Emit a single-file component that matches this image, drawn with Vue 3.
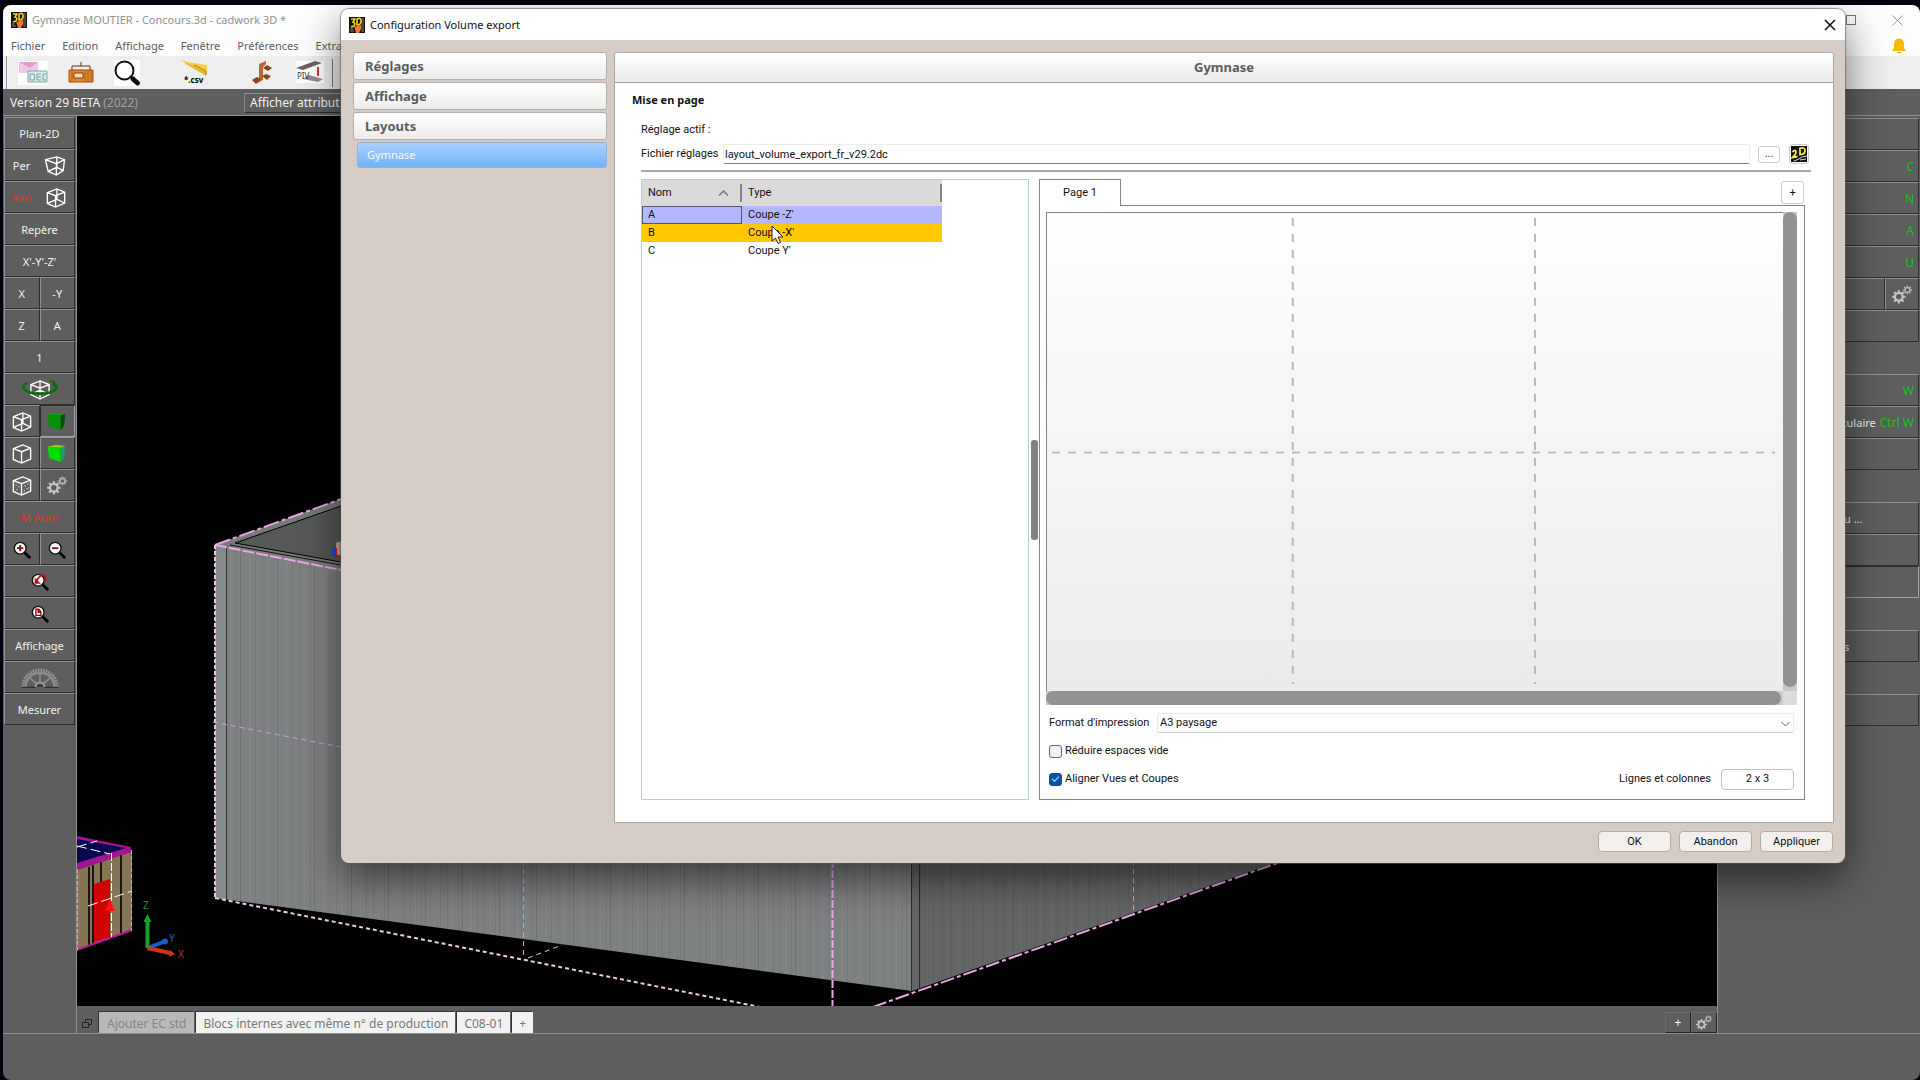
<script setup>
import { ref } from 'vue'

const menus = ['Fichier', 'Edition', 'Affichage', 'Fenêtre', 'Préférences', 'Extra']

const leftRows = [
  [{ text: 'Plan-2D' }],
  [{ text: 'Per', icon: 'cube-persp' }],
  [{ text: 'Axo', icon: 'cube-wire', red: true }],
  [{ text: 'Repère' }],
  [{ text: "X'-Y'-Z'" }],
  [{ text: 'X' }, { text: '-Y' }],
  [{ text: 'Z' }, { text: 'A' }],
  [{ text: '1' }],
  [{ icon: 'cube-orbit', label: 'Rotation', wide: true }],
  [{ icon: 'cube-wire', label: 'Filaire' }, { icon: 'cube-green', label: 'Ombrage', pressed: true }],
  [{ icon: 'cube-hidden', label: 'Lignes cachées' }, { icon: 'cube-lime', label: 'Rendu' }],
  [{ icon: 'cube-dots', label: 'Arêtes' }, { icon: 'gears', label: 'Options' }],
  [{ text: 'M Auto', red: true }],
  [{ icon: 'zoom-in', label: 'Zoom avant' }, { icon: 'zoom-out', label: 'Zoom arrière' }],
  [{ icon: 'zoom-back', label: 'Zoom précédent' }],
  [{ icon: 'zoom-page', label: 'Zoom page' }],
  [{ text: 'Affichage' }],
  [{ icon: 'gauge', label: 'Unités', wide: true }],
  [{ text: 'Mesurer' }],
]

const rightRows = [
  { }, { key: 'C' }, { key: 'N' }, { key: 'A' }, { key: 'U' }, { gears: true }, { },
  { gap: true },
  { key: 'W' }, { text: 'culaire', key: 'Ctrl W' }, { },
  { gap: true },
  { text: 'u ...', start: true }, { }, { pressed: true },
  { gap: true },
  { text: 's', start: true },
  { gap: true },
  { },
]

const navItems = ['Réglages', 'Affichage', 'Layouts']
const views = [
  { name: 'A', type: "Coupe -Z'", state: 'selected' },
  { name: 'B', type: "Coupe -X'", state: 'hover' },
  { name: 'C', type: "Coupe Y'", state: '' },
]

const file = ref('layout_volume_export_fr_v29.2dc')
const format = ref('A3 paysage')
const reduce = ref(false)
const align = ref(true)

function gear(cx, cy, r, teeth) {
  const pts = []
  const step = (Math.PI * 2) / teeth
  for (let i = 0; i < teeth; i++) {
    const a = i * step
    for (const [o, k] of [[-0.26, 0.74], [-0.18, 1], [0.18, 1], [0.26, 0.74]]) {
      pts.push(`${(cx + Math.cos(a + o * step) * r * k).toFixed(2)} ${(cy + Math.sin(a + o * step) * r * k).toFixed(2)}`)
    }
  }
  const h = r * 0.4
  return `M${pts.join('L')}ZM${cx - h} ${cy}a${h} ${h} 0 1 0 ${h * 2} 0a${h} ${h} 0 1 0 ${-h * 2} 0Z`
}

const bigGear = gear(7.5, 13, 7.5, 8)
const smallGear = gear(17, 5.5, 5, 8)
</script>

<template>
  <div class="screen">
    <svg class="defs" aria-hidden="true">
      <symbol id="logo" viewBox="0 0 16 16">
        <rect width="16" height="16" fill="#14110d" />
        <rect x="12" y="1" width="3" height="14" fill="#4a463c" />
        <path d="M2 2h4l-2 3q3 1 1 4l-3 1" fill="none" stroke="#f4d21f" stroke-width="1.6" />
        <path d="M8 2v6q4 0 4-4t-4-2" fill="none" stroke="#f4d21f" stroke-width="1.6" />
        <path d="M5 9l2 1 1-2 1 1 3-1v4l-2 4H7z" fill="#f07830" />
        <path d="M1 12h3M1 14h4" stroke="#8a8470" />
      </symbol>
      <symbol id="cube-wire" viewBox="0 0 22 22">
        <path d="M1.500 5L12 1l8.500 3.500v12L10.500 21l-9-4zM1.500 5l9 3.500 10-4M10.500 8.500V21M12 1v11.500M1.500 17L12 12.500l8.500 4" />
      </symbol>
      <symbol id="cube-persp" viewBox="0 0 22 22">
        <path d="M.500 4L13 1l8.500 3-1.500 12-7.500 5L3.500 17zM.500 4l12 4.500 9-4.500M12.500 8.500V21M13 1v11.500M3.500 17l9.500-4.500 7 3.500" />
      </symbol>
      <symbol id="cube-hidden" viewBox="0 0 22 22">
        <path d="M1.500 5L12 1l8.500 3.500v12L10.500 21l-9-4zM1.500 5l9 3.500 10-4M10.500 8.500V21" />
      </symbol>
      <symbol id="cube-dots" viewBox="0 0 22 22">
        <path d="M1.500 5L12 1l8.500 3.500v12L10.500 21l-9-4zM1.500 5l9 3.500 10-4M10.500 8.500V21" />
        <path d="M4 10h1M7 12h1M5 15h1M14 11h1M17 9h1M16 14h1M13 16h1M18 13h1" />
      </symbol>
      <symbol id="cube-green" viewBox="0 0 22 22">
        <path d="M1 3l8-2 11 1-5 2z" fill="#0aa00a" stroke="none" />
        <path d="M1 3l14 1v16L2 15z" fill="#009300" stroke="none" />
        <path d="M15 4l5-2-1 13-4 5z" fill="#004f00" stroke="none" />
      </symbol>
      <symbol id="cube-lime" viewBox="0 0 22 22">
        <path d="M1 3l8-2 11 1-5 2z" fill="#9bd010" stroke="none" />
        <path d="M1 3l14 1v16L2 15z" fill="#00dc00" stroke="none" />
        <path d="M15 4l5-2-1 13-4 5z" fill="#17a45c" stroke="none" />
      </symbol>
      <symbol id="cube-orbit" viewBox="0 0 40 22">
        <path d="M10 5l10-4 10 4v11l-10 5-10-5zM10 5l10 4 10-4M20 9v12M20 1v10M10 16l10-5 10 5" />
        <path d="M6 3C-3 8 4 15 20 15S43 8 34 3" stroke="#087008" stroke-width="3" />
        <path d="M31 1l5 1-1 5" stroke="#087008" stroke-width="2" />
      </symbol>
      <symbol id="gears" viewBox="0 0 22 22">
        <path :d="bigGear" fill="#c4c4c4" fill-rule="evenodd" stroke="none" />
        <path :d="smallGear" fill="#b4b4b4" fill-rule="evenodd" stroke="none" />
      </symbol>
      <symbol id="zoom-in" viewBox="0 0 20 20">
        <path d="M13 13l6 6" stroke="#000" stroke-width="3" />
        <circle cx="8" cy="8" r="6.500" fill="#fff" stroke="#111" />
        <path d="M8 4.500v7M4.500 8h7" stroke="#8d0808" stroke-width="2" />
      </symbol>
      <symbol id="zoom-out" viewBox="0 0 20 20">
        <path d="M13 13l6 6" stroke="#000" stroke-width="3" />
        <circle cx="8" cy="8" r="6.500" fill="#fff" stroke="#111" />
        <path d="M4.500 8h7" stroke="#8d0808" stroke-width="2" />
      </symbol>
      <symbol id="zoom-back" viewBox="0 0 20 20">
        <path d="M13 13l6 6" stroke="#000" stroke-width="3" />
        <circle cx="8" cy="8" r="6.500" fill="#fff" stroke="#111" />
        <path d="M6 10Q8 3 14 2q4 2 1 8" fill="none" stroke="#c01010" stroke-width="2" />
        <path d="M4 5v7h7z" fill="#c01010" stroke="none" />
      </symbol>
      <symbol id="zoom-page" viewBox="0 0 20 20">
        <path d="M13 13l6 6" stroke="#000" stroke-width="3" />
        <circle cx="8" cy="8" r="6.500" fill="#fff" stroke="#111" />
        <path d="M5.500 4.500h3l2.500 3v4H5.500zM8 4.500V8h3" stroke="#8d0808" stroke-width="1.500" />
      </symbol>
      <symbol id="gauge" viewBox="0 0 42 22">
        <path d="M2 21a19 19 0 0 1 38 0" stroke="#949494" stroke-width="3" stroke-dasharray="2 1" />
        <path d="M5 21a16 16 0 0 1 32 0" stroke="#8a8a8a" stroke-width="3" />
        <path d="M16 21a5 5 0 0 1 10 0" stroke="#949494" stroke-width="3" />
        <path d="M21 15V5M17 17L9 10M25 17l8-7" stroke="#8a8a8a" stroke-width="2" />
        <path d="M1 21.500h15M26 21.500h15M19 21v-2h4v2" stroke="#2c2c2c" />
      </symbol>
    </svg>

    <div class="window">
      <header class="titlebar">
        <svg class="logo"><use href="#logo" /></svg>
        <h1>Gymnase MOUTIER - Concours.3d - cadwork 3D *</h1>
        <div class="win-buttons">
          <button type="button" aria-label="Agrandir"><svg width="10" height="10"><rect x="0.5" y="0.5" width="9" height="9" fill="none" stroke="#777" /></svg></button>
          <button type="button" aria-label="Fermer"><svg width="11" height="11"><path d="M0.5 0.5l10 10m0-10l-10 10" stroke="#999" /></svg></button>
        </div>
      </header>
      <nav class="menubar">
        <a v-for="m in menus" :key="m" href="#">{{ m }}</a>
        <svg class="bell" width="16" height="16" viewBox="0 0 16 16"><path d="M1 13l2-3V6q0-5 5-5.500Q13 1 13 6v4l2 3z" fill="#fbb800" /><path d="M6 14h4v1H6z" fill="#e09c00" /></svg>
      </nav>
      <div class="toolbar">
        <svg width="30" height="24" viewBox="0 0 30 24">
          <rect width="30" height="24" fill="#fff" />
          <path d="M1 1h19v11H1z" fill="#f2c8e6" /><path d="M1 1h19l-8 6z" fill="#dd9fce" />
          <path d="M10 10h19v11H10z" fill="#d9f1ee" stroke="#7fa5a2" />
          <path d="M12 13h4q2 3 0 6h-4zM23 13h-4v6h4M19 16h4M28 13h-3v6h3" fill="none" stroke="#7b9cb0" />
        </svg>
        <svg width="26" height="22" viewBox="0 0 26 22">
          <path d="M13 0v4M4 8V4h18v4" fill="none" stroke="#6c2c10" />
          <path d="M1 8h24v12H1z" fill="#e48a2a" stroke="#a24a12" />
          <path d="M4 8v12M17 8v12M20 8v12M23 8v12" stroke="#a85a1a" />
          <path d="M6 11h9v5H6z" fill="#f8e0c4" stroke="#8c3c10" />
        </svg>
        <svg width="26" height="26" viewBox="0 0 26 26">
          <rect width="26" height="26" fill="#fff" />
          <circle cx="10.500" cy="10.500" r="9" fill="#fff" stroke="#111" stroke-width="2" />
          <path d="M19 19l4.500 4" stroke="#111" stroke-width="5" stroke-linecap="round" />
          <path d="M16 16l4 4" stroke="#111" stroke-width="2" />
        </svg>
        <svg class="wide" width="27" height="28" viewBox="0 0 27 28">
          <path d="M0 1l24 11v5L4 5z" fill="#ecb826" /><path d="M0 2l25 4v6L10 6z" fill="#f6d04c" /><path d="M12 6l12 6v4" fill="none" stroke="#b07f10" />
          <text x="2" y="24" font-family="Noto Sans" font-size="8" font-weight="700">*.csv</text>
        </svg>
        <svg class="wide" width="22" height="24" viewBox="0 0 22 24">
          <path d="M8 3l7-3v3l-3 3v13l-5 3-3-2 4-3z" fill="#b5693a" />
          <path d="M12 7l4-3 5 3-4 3zM11 15l4-2 5 2-4 4zM1 19l5-3 4 2-5 5z" fill="#8f4518" />
        </svg>
        <svg class="plate" width="28" height="24" viewBox="0 0 28 24">
          <rect width="28" height="22" fill="#fff" />
          <path d="M0 7l19-7 7 2L7 9z" fill="#6d6261" /><path d="M7 18l6-4 14 4-5 3z" fill="#8f8f8f" />
          <path d="M22 6v9" stroke="#e03030" stroke-width="2" />
          <text x="1" y="18" font-family="Noto Sans" font-size="8" fill="#333">PIV</text>
        </svg>
        <i class="sep"></i>
      </div>
      <div class="version">
        <span>Version 29 BETA <i>(2022)</i></span>
        <button type="button">Afficher attribut</button>
      </div>

      <div class="workspace">
        <aside class="left">
          <div v-for="(row, i) in leftRows" :key="i" class="row">
            <button v-for="(c, j) in row" :key="j" type="button" :aria-label="c.label" :class="{ red: c.red, pressed: c.pressed }">
              <span v-if="c.text">{{ c.text }}</span>
              <svg v-if="c.icon" class="ico" :class="{ big: c.wide, lens: c.icon.startsWith('zoom') }"><use :href="'#' + c.icon" /></svg>
            </button>
          </div>
        </aside>

        <div class="center">
          <svg class="scene" role="img" aria-label="Vue 3D">
            <defs>
              <pattern id="steel" width="37" height="60" patternUnits="userSpaceOnUse">
                <rect width="37" height="60" fill="#7e8181" />
                <path d="M3.500 0v60M14.500 0v60M33.500 0v60" stroke="#767979" />
                <path d="M8.500 0v60M27.500 0v60" stroke="#848787" />
                <path d="M18.500 0v60" stroke="#6f7272" />
              </pattern>
              <pattern id="steel-dark" width="31" height="60" patternUnits="userSpaceOnUse">
                <rect width="31" height="60" fill="#646666" />
                <path d="M3.500 0v60M12.500 0v60M21.500 0v60" stroke="#5d5f5f" />
                <path d="M17.500 0v60M28.500 0v60" stroke="#696b6b" />
              </pattern>
            </defs>
            <g transform="translate(-77 -116)">
              <path d="M215 545L341 499V572z" fill="#777a7a" />
              <path d="M235 543L341 506V562z" fill="#565858" stroke="#000" />
              <path d="M230 545l111 20" stroke="#111" fill="none" />
              <path d="M336 543l5-2v14h-5z" fill="#c8a890" /><path d="M332 548h3v8h-3z" fill="#2348c8" /><path d="M335 548h2v9h-2z" fill="#d01818" />
              <path d="M215 545L912 672V991L215 898z" fill="url(#steel)" />
              <path d="M215 545L227 547V900L215 898z" fill="#868989" />
              <path d="M226.500 547V900" stroke="#333" />
              <path d="M912 672L1560 640V762L912 991z" fill="url(#steel-dark)" />
              <path d="M911.500 672V991M919.500 672V988" stroke="#2b2d2d" />
              <g fill="none" stroke="#eba6e6" stroke-width="2">
                <path d="M215 545L341 499" stroke-dasharray="16 3 4 3" />
                <path d="M215 545L341 570" stroke-dasharray="12 2" />
                <path d="M215 545V898" stroke="#f0bcec" stroke-dasharray="4 2" />
                <path d="M215 898L770 1009" stroke="#eccbe9" stroke-dasharray="4 3" />
                <path d="M832.500 840V1006" stroke-dasharray="8 2" />
                <path d="M873 1007L1300 855" stroke-dasharray="14 3 4 3" />
              </g>
              <g fill="none" stroke="#d3a0cf" stroke-dasharray="5 4">
                <path d="M213 722L341 747" /><path d="M523.500 860V957" /><path d="M528 958L562 945" stroke="#ccc" /><path d="M1133.500 860V912" />
              </g>
              <g>
                <path d="M77 836L131 847V853L77 870z" fill="#a3158f" />
                <path d="M77 839L126 848L77 863z" fill="#080850" />
                <path d="M77 847L97 841M77 846L110 854" stroke="#fff" stroke-dasharray="10 4" />
                <path d="M77 870L132 852V930L77 950z" fill="#857555" />
                <path d="M89 867V945M93 865V944M101 862V884M121 855V933" stroke="#1c1510" stroke-width="2" />
                <path d="M94 884L110 879V937L94 942z" fill="#d00404" />
                <path d="M77 950L132 930" stroke="#b01a9a" stroke-width="2" />
                <path d="M111.500 853V937" stroke="#fff" stroke-dasharray="8 2" />
                <path d="M88 906L132 891" stroke="#fff" stroke-dasharray="10 4" />
                <path d="M110 899L115 911H105z" fill="#f11" />
                <path d="M131.500 850V931M77.500 869V950" stroke="#d8a8a8" stroke-dasharray="4 2" />
              </g>
              <g fill="none" stroke-width="4">
                <path d="M147.500 948L166 941" stroke="#1560c8" /><circle cx="165" cy="941.500" r="3" fill="#1560c8" stroke="none" />
                <path d="M147.500 948V920" stroke="#17a023" /><path d="M147.500 914l4 8h-8z" fill="#17a023" stroke="none" />
                <path d="M147.500 948L170 953" stroke="#d33410" /><path d="M175 954l-6 3 1-7z" fill="#d33410" stroke="none" />
              </g>
              <g class="axis"><text x="143" y="909" fill="#2c8c38">Z</text><text x="169" y="942" fill="#2860a8">Y</text><text x="178" y="958" fill="#b03428">X</text></g>
            </g>
          </svg>
          <div class="tabs">
            <svg class="restore" width="10" height="10"><path d="M3.500 3V.500h6v5H7M.500 3.500h6v5h-6z" fill="none" stroke="#222" /></svg>
            <button type="button" class="off">Ajouter EC std</button>
            <button type="button">Blocs internes avec même n° de production</button>
            <button type="button">C08-01</button>
            <button type="button">+</button>
            <span class="grow"></span>
            <button type="button" class="dark">+</button>
            <button type="button" class="dark" aria-label="Options"><svg class="ico small"><use href="#gears" /></svg></button>
          </div>
        </div>

        <aside class="right">
          <div v-for="(r, i) in rightRows" :key="i" class="row">
            <template v-if="!r.gap">
              <button type="button" :class="{ pressed: r.pressed, start: r.start }" :aria-label="r.text ? undefined : 'Commande ' + (i + 1)">
                <span v-if="r.text">{{ r.text }}</span><kbd v-if="r.key">{{ r.key }}</kbd>
              </button>
              <button v-if="r.gears" type="button" class="gear" aria-label="Options"><svg class="ico"><use href="#gears" /></svg></button>
            </template>
          </div>
        </aside>
      </div>
      <footer class="status"></footer>
    </div>

    <section class="dialog" role="dialog" aria-labelledby="dlg-title">
      <header class="dlg-title">
        <svg class="logo"><use href="#logo" /></svg>
        <h2 id="dlg-title">Configuration Volume export</h2>
        <button type="button" aria-label="Fermer"><svg width="12" height="12"><path d="M1 1l10 10m0-10L1 11" stroke="#111" stroke-width="1.500" /></svg></button>
      </header>
      <div class="dlg-body">
        <nav class="side">
          <button v-for="n in navItems" :key="n" type="button">{{ n }}</button>
          <button type="button" class="active">Gymnase</button>
        </nav>
        <div class="panel">
          <h3 class="panel-head">Gymnase</h3>
          <div class="panel-body">
            <h4>Mise en page</h4>
            <div class="content">
              <p class="setting">Réglage actif :</p>
              <div class="file-row">
                <label for="file">Fichier réglages</label>
                <input id="file" v-model="file" type="text">
                <button type="button" class="browse">...</button>
                <button type="button" class="twod" aria-label="2D">
                  <svg width="16" height="16" viewBox="0 0 16 16"><rect width="16" height="16" fill="#111" /><path d="M1.500 6q3-3 3.500 0 0 2-3.500 5.500l5-1M9 2.500v6q5 0 5-4t-6-2" fill="none" stroke="#efe84a" stroke-width="1.800" /><path d="M3 15l5-2 3-2 5-1M9 14l6-1" stroke="#ddd" fill="none" /></svg>
                </button>
              </div>
              <div class="split">
                <div class="list">
                  <table>
                    <thead>
                      <tr><th><span>Nom<svg width="11" height="6"><path d="M1 5.500l4.500-4.500L10 5.500" fill="none" stroke="#777" stroke-width="1.500" /></svg></span></th><th><span>Type</span></th></tr>
                    </thead>
                    <tbody>
                      <tr v-for="v in views" :key="v.name" :class="v.state"><td>{{ v.name }}</td><td>{{ v.type }}</td></tr>
                    </tbody>
                  </table>
                  <svg class="cursor" width="13" height="20" viewBox="0 0 13 20"><path d="M1 1v15l3.500-3 2.500 5.500 2.500-1L7 12h5z" fill="#fff" stroke="#222" /></svg>
                </div>
                <div class="handle"><i></i></div>
                <div class="pages">
                  <div class="page-tabs">
                    <button type="button" class="page-tab">Page 1</button>
                    <button type="button" class="add">+</button>
                  </div>
                  <div class="page-pane">
                    <div class="sheet">
                      <div class="paper">
                        <svg width="100%" height="100%">
                          <g stroke="#b9b9b9" stroke-width="2" stroke-dasharray="8 8">
                            <line x1="33.3%" y1="0" x2="33.3%" y2="100%" /><line x1="66.8%" y1="0" x2="66.8%" y2="100%" /><line x1="0" y1="50.300%" x2="100%" y2="50.300%" />
                          </g>
                        </svg>
                      </div>
                      <div class="bar-v"><i></i></div>
                      <div class="bar-h"><i></i></div>
                      <div class="corner"></div>
                    </div>
                    <div class="format-row">
                      <label for="format">Format d'impression</label>
                      <span class="combo">
                        <select id="format" v-model="format"><option>A3 paysage</option></select>
                        <svg width="9" height="6"><path d="M.500 1l4 4 4-4" fill="none" stroke="#666" /></svg>
                      </span>
                    </div>
                    <label class="check"><input v-model="reduce" type="checkbox">Réduire espaces vide</label>
                    <div class="align-row">
                      <label class="check"><input v-model="align" type="checkbox">Aligner Vues et Coupes</label>
                      <label for="grid" class="grid-label">Lignes et colonnes</label>
                      <button id="grid" type="button" class="push">2 x 3</button>
                    </div>
                  </div>
                </div>
              </div>
            </div>
          </div>
        </div>
      </div>
      <footer class="dlg-foot">
        <button type="button" class="push">OK</button>
        <button type="button" class="push">Abandon</button>
        <button type="button" class="push">Appliquer</button>
      </footer>
    </section>
  </div>
</template>

<style>
html, body { background: #01040f; }
</style>

<style scoped>
* { box-sizing: border-box; }
h1, h2, h3, h4, p { margin: 0; }
button, input, select, kbd { font: inherit; color: inherit; }
button { padding: 0; border: 0; background: none; }
svg { display: block; flex: none; }
.defs { position: absolute; width: 0; height: 0; }

.screen {
  position: relative;
  display: flex;
  min-height: 100vh;
  padding: 5px 0 0 3px;
  overflow: hidden;
  font: 12px/16px "Noto Sans", "Open Sans", sans-serif;
}
.window {
  flex: 1;
  min-width: 0;
  display: flex;
  flex-direction: column;
  border-radius: 8px;
  overflow: hidden;
  background: #5e5e5e;
  color: #f2f2f2;
}
.logo { width: 16px; height: 16px; }

.titlebar { display: flex; align-items: center; gap: 5px; height: 30px; padding: 0 17px 0 8px; background: #fdfdfd; }
.titlebar h1 { flex: 1; font-size: 11px; font-weight: 400; color: #929292; }
.win-buttons { display: flex; gap: 36px; }
.menubar { display: flex; align-items: center; gap: 17px; height: 21px; padding: 0 13px 0 8px; background: #fdfdfd; }
.menubar a { color: #5c5c5c; font-size: 11px; text-decoration: none; }
.bell { margin-left: auto; }
.toolbar { display: flex; align-items: center; gap: 20px; height: 33px; padding: 0 11px; background: #eee; border-left: 1px solid #999; margin-left: 3px; box-shadow: -3px 0 #eee; }
.toolbar svg { overflow: visible; }
.toolbar .wide { margin-left: 22px; }
.plate { margin-left: 3px; }
.sep { width: 1px; height: 28px; margin-left: -12px; background: #777; }
.version { display: flex; align-items: center; height: 27px; padding: 2px 0 0 7px; border-bottom: 1px solid #929292; }
.version span { width: 234px; }
.version i { font-style: normal; color: #a2a2a2; }
.version button { width: 120px; height: 20px; padding-left: 5px; line-height: 18px; text-align: left; border: 1px solid #8c8c8c; border-bottom-color: #2e2e2e; }

.workspace { flex: 1; min-height: 0; display: flex; border-bottom: 1px solid #8d8d8d; }
.left { width: 74px; padding: 1px 1px 0; border-right: 1px solid #929292; font-size: 11px; }
.row { display: flex; height: 32px; }
.row button {
  flex: 1;
  min-width: 0;
  display: flex;
  align-items: center;
  justify-content: center;
  gap: 14px;
  padding-top: 1px;
  border: 1px solid;
  border-color: #929292 #2e2e2e #2e2e2e #929292;
}
.row button.pressed { border-color: #2e2e2e #a5a5a5 #a5a5a5 #2e2e2e; }
.left .red { color: #e0352c; }
.ico { width: 22px; height: 20px; fill: none; stroke: #fff; stroke-width: 1.5; }
.ico.big { width: 40px; }
.ico.lens { width: 18px; height: 18px; }
.ico.small { width: 18px; height: 16px; }

.center { flex: 1; min-width: 0; display: flex; flex-direction: column; }
.scene { flex: 1; width: 100%; min-height: 0; background: #000; }
.axis { font: 10px "Noto Sans", sans-serif; }
.tabs { display: flex; align-items: flex-end; height: 27px; flex: none; }
.restore { margin: 0 7px 4px 5px; }
.tabs button { height: 21px; padding: 2px 7px 0; margin-right: 2px; background: #f2f2f2; color: #777; line-height: 19px; box-shadow: -1px -1px #333; }
.tabs .off { background: #b9b9b9; color: #858585; padding: 2px 8px 0; }
.tabs .grow { flex: 1; }
.tabs .dark { display: flex; align-items: center; justify-content: center; width: 26px; margin: 0; padding: 0; background: none; color: #fff; box-shadow: none; border: 1px solid; border-color: #6c6c6c #222 #222 #6c6c6c; }

.right { width: 203px; padding: 2px 1px 0 0; border-left: 1px solid #929292; }
.right .row button { justify-content: flex-end; gap: 4px; padding-right: 4px; }
.right .row button.start { justify-content: flex-start; padding-left: 125px; }
.right .row button.gear { flex: 0 0 34px; justify-content: center; padding-right: 0; }
.right span { font-size: 11px; }
.right kbd { color: #12c41c; }
.status { height: 46px; }

.dialog {
  position: absolute;
  inset: 9px 75px 217px 341px;
  display: flex;
  flex-direction: column;
  border-radius: 8px;
  overflow: hidden;
  background: #d5ccc5;
  color: #111;
  font: 11px/16px Roboto, "Noto Sans", sans-serif;
  box-shadow: 0 0 1px 1px rgba(90, 90, 90, 0.6), 0 16px 40px rgba(0, 0, 0, 0.55);
}
.dlg-title { display: flex; align-items: center; gap: 5px; height: 31px; padding: 0 9px 0 8px; background: #fff; }
.dlg-title h2 { flex: 1; font: 400 11px/16px "Noto Sans", sans-serif; }
.dlg-body { flex: 1; min-height: 0; display: flex; gap: 7px; padding: 12px 11px 0 12px; }
.side { display: flex; flex-direction: column; gap: 2px; width: 254px; }
.side button { height: 28px; padding-left: 11px; border: 1px solid #b5afaa; border-radius: 3px; background: linear-gradient(#fff, #ececec); color: #5c5c5c; font: 700 13px/16px "Noto Sans", sans-serif; text-align: left; }
.side .active { height: 26px; margin-left: 4px; padding-left: 9px; border-color: #91b5d8; background: linear-gradient(#a9d1fc, #72b3fb); color: #f4f9ff; font-size: 11px; font-weight: 400; }
.panel { flex: 1; min-width: 0; display: flex; flex-direction: column; border: 1px solid #a9a5a1; border-radius: 4px 4px 0 0; background: #fff; overflow: hidden; }
.panel-head { height: 30px; border-bottom: 1px solid #a0a0a0; background: linear-gradient(#fff, #ebebeb); color: #5c5c5c; font: 700 13px/29px "Noto Sans", sans-serif; text-align: center; }
.panel-body { flex: 1; min-height: 0; display: flex; flex-direction: column; padding: 9px 22px 22px 17px; }
.panel-body h4 { font: 700 11px/16px "Noto Sans", sans-serif; }
.content { flex: 1; min-height: 0; display: flex; flex-direction: column; padding-left: 9px; }
.setting { margin-top: 14px; }
.file-row { display: flex; align-items: center; height: 34px; margin-bottom: 7px; padding: 0 2px 0 0; border-bottom: 2px solid #aaa9a1; }
.file-row label { width: 82px; white-space: nowrap; }
.file-row input { flex: 1; min-width: 0; height: 20px; padding: 0 0 0 1px; border: 1px solid #ececec; border-bottom-color: #808080; border-radius: 2px; background: #fff; outline: none; }
.browse { width: 22px; height: 17px; margin: 0 9px 0 8px; border: 1px solid #ccc; border-radius: 3px; }
.browse, .add { line-height: 14px; }
.twod { width: 20px; height: 20px; padding: 1px; border: 1px solid #ccc; border-radius: 3px; }
.split { flex: 1; min-height: 0; display: flex; padding-right: 6px; }
.list { position: relative; flex: 0 1 388px; border: 1px solid #b3d2d8; }
table { width: 300px; border-collapse: collapse; table-layout: fixed; }
th { width: 100px; height: 26px; padding: 0; background: #dadada; font-weight: 400; text-align: left; }
th:last-child { width: 200px; }
th span { display: flex; align-items: center; justify-content: space-between; height: 18px; padding: 0 11px 0 6px; border-right: 2px solid #868686; }
td { height: 18px; padding: 0 0 0 6px; line-height: 16px; }
.selected { background: #b5b7fe; }
.selected td:first-child { outline: 1px solid #555577; outline-offset: -1px; }
.hover { background: #ffc800; }
.cursor { position: absolute; left: 129px; top: 45px; }
.handle { width: 10px; display: flex; align-items: center; justify-content: center; }
.handle i { width: 7px; height: 100px; border-radius: 3px; background: #828282; }
.pages { flex: 1; min-width: 0; display: flex; flex-direction: column; }
.page-tabs { display: flex; justify-content: space-between; align-items: center; height: 27px; margin-bottom: -1px; z-index: 1; }
.page-tab { width: 82px; height: 27px; border: 1px solid #858585; border-bottom: 0; background: #fff; }
.add { width: 23px; height: 23px; margin-right: 1px; border: 1px solid #ccc; border-radius: 3px; }
.page-pane { flex: 1; min-height: 0; display: flex; flex-direction: column; padding: 6px 7px 9px 6px; border: 1px solid #858585; }
.sheet { flex: 1; min-height: 0; display: grid; grid-template: 1fr 14px / 1fr 14px; }
.paper { min-height: 0; padding: 5px 8px 7px 5px; border: solid #858585; border-width: 1px 0 0 1px; background: linear-gradient(#fefefe, #ebebeb); }
.bar-v, .bar-h { display: flex; background: #c9c9c9; }
.bar-v { padding-bottom: 4px; }
.bar-h { padding-right: 2px; }
.bar-v i, .bar-h i { flex: 1; border-radius: 7px; background: #929292; }
.corner { background: #dcdcdc; }
.format-row { display: flex; align-items: center; height: 36px; padding: 0 3px; }
.format-row label { width: 108px; white-space: nowrap; }
.combo { position: relative; flex: 1; }
.combo select { display: block; width: 100%; height: 20px; padding: 0 2px; border: 1px solid #eaeaea; border-bottom-color: #ccc; border-radius: 2px; background: #fff; appearance: none; outline: none; }
.combo svg { position: absolute; right: 4px; top: 8px; pointer-events: none; }
.check { display: flex; align-items: center; gap: 3px; height: 20px; padding-left: 3px; }
.check input { display: flex; align-items: center; justify-content: center; width: 13px; height: 13px; margin: 0; border: 1px solid #666; border-radius: 3px; background: #f1f1f4; appearance: none; }
.check input:checked { border-color: #0550a8; background: #0550a8; }
.check input:checked::after { content: ""; width: 6px; height: 3px; border: solid #cfe0f6; border-width: 0 0 1px 1px; rotate: -45deg; translate: 0 -1px; }
.align-row { display: flex; align-items: center; height: 22px; margin-top: 7px; padding-right: 3px; }
.grid-label { margin-left: auto; padding-right: 10px; }
.push { width: 73px; height: 21px; border: 1px solid #c4c0bd; border-radius: 4px; background: #fff; }
.dlg-foot { display: flex; justify-content: flex-end; gap: 8px; height: 40px; padding: 8px 12px 0 0; }
.dlg-foot .push { border-color: #b3aca6; background: #f3efed; }
</style>
